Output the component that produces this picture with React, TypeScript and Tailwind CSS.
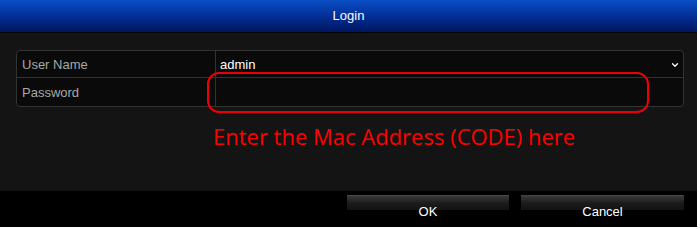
import { ChevronDown } from 'lucide-react'

export default function App() {
  return (
    <div className="w-[700px] h-[229px] bg-white" style={{ fontFamily: '"Liberation Sans", Arial, sans-serif' }}>
      <div className="relative w-[697px] h-[227px] flex flex-col overflow-hidden">
        {/* Title bar */}
        <div className="h-[33px] flex items-center justify-center bg-gradient-to-b from-[#0a4ec6] via-[#032f96] to-[#001660] border-b border-[#050505]">
          <span className="text-white text-[13px]">Login</span>
        </div>

        {/* Body */}
        <div className="h-[158px] bg-[#141414] pt-[17px] pl-[16px]">
          <div className="w-[668px] rounded-[4px] border border-[#333] bg-[#0a0a0a] text-[13px]">
            <div className="flex h-[27px] border-b border-[#333]">
              <div className="w-[199px] flex items-center pl-[5px] pt-[1px] text-[#a8a8a8] border-r border-[#333]">User Name</div>
              <div className="flex-1 flex items-center justify-between pl-[4px] pr-[3px] pt-[1px] text-white">
                <span>admin</span>
                <ChevronDown size={10} strokeWidth={3} className="text-white" />
              </div>
            </div>
            <div className="flex h-[28px]">
              <div className="w-[199px] flex items-center pl-[5px] pt-[1px] text-[#a8a8a8] border-r border-[#333]">Password</div>
              <div className="flex-1" />
            </div>
          </div>
          <div
            className="mt-[15px] ml-[197px] text-[#ff0000] text-[22px] leading-[28px]"
            style={{ fontFamily: '"Open Sans", "Noto Sans", sans-serif' }}
          >
            Enter the Mac Address (CODE) here
          </div>
        </div>

        {/* Footer */}
        <div className="flex-1 bg-black flex justify-end gap-[12px] pr-[13px] pt-[4px]">
          <button className="relative w-[162px] h-[15px] bg-gradient-to-b from-[#3a3a3a] via-[#1c1c1c] to-[#121212] border-t border-[#444]">
            <span className="absolute left-0 right-0 top-[6px] text-center text-white text-[13px]">OK</span>
          </button>
          <button className="relative w-[163px] h-[15px] bg-gradient-to-b from-[#3a3a3a] via-[#1c1c1c] to-[#121212] border-t border-[#444]">
            <span className="absolute left-0 right-0 top-[6px] text-center text-white text-[13px]">Cancel</span>
          </button>
        </div>

        {/* Red annotation */}
        <div className="absolute left-[207px] top-[72px] w-[442px] h-[41px] rounded-[12px] border-2 border-[#ee0000]" />
      </div>
    </div>
  )
}
